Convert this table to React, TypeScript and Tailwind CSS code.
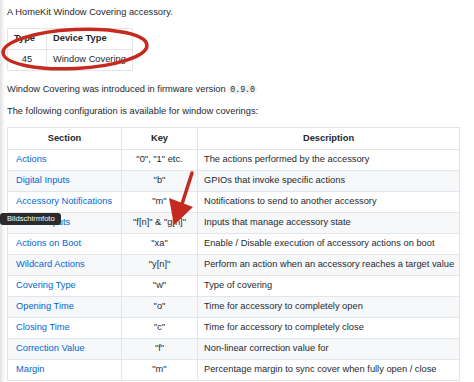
const rows: [string, string, string][] = [
  ["Actions", '"0", "1" etc.', "The actions performed by the accessory"],
  ["Digital Inputs", '"b"', "GPIOs that invoke specific actions"],
  ["Accessory Notifications", '"m"', "Notifications to send to another accessory"],
  ["Status Inputs", '"f[n]" & "g[n]"', "Inputs that manage accessory state"],
  ["Actions on Boot", '"xa"', "Enable / Disable execution of accessory actions on boot"],
  ["Wildcard Actions", '"y[n]"', "Perform an action when an accessory reaches a target value"],
  ["Covering Type", '"w"', "Type of covering"],
  ["Opening Time", '"o"', "Time for accessory to completely open"],
  ["Closing Time", '"c"', "Time for accessory to completely close"],
  ["Correction Value", '"f"', "Non-linear correction value for"],
  ["Margin", '"m"', "Percentage margin to sync cover when fully open / close"],
];

export default function App() {
  return (
    <div className="relative flex h-[382px] w-[474px] overflow-hidden bg-white font-['Liberation_Sans',Arial,sans-serif] text-[9.3px] text-[#24292e]">
      {/* left edge shadow */}
      <div className="w-[5px] shrink-0 bg-gradient-to-r from-[#e2e2e2] to-white" />

      <div className="flex flex-col pl-[2px]">
        <p className="mt-[5px] leading-[14px]">A HomeKit Window Covering accessory.</p>

        {/* device type table */}
        <table className="mt-[9px] w-[126px] border-collapse">
          <thead>
            <tr className="h-[21px]">
              <th className="w-[39px] border border-[#e1e4e8] px-[6px] text-left font-bold">Type</th>
              <th className="border border-[#e1e4e8] px-[6px] text-left font-bold">Device Type</th>
            </tr>
          </thead>
          <tbody>
            <tr className="h-[21px] bg-white">
              <td className="border border-[#e1e4e8] px-[6px] text-center">45</td>
              <td className="border border-[#e1e4e8] px-[6px]">Window Covering</td>
            </tr>
          </tbody>
        </table>

        <p className="mt-[11px] leading-[14px]">
          Window Covering was introduced in firmware version{" "}
          <code className="rounded-[3px] bg-[#f3f4f4] px-[2px] font-['Liberation_Mono',monospace] text-[8.3px]">0.9.0</code>
        </p>
        <p className="mt-[7px] leading-[14px]">The following configuration is available for window coverings:</p>

        {/* configuration table */}
        <table className="mt-[9px] w-[453px] table-fixed border-collapse">
          <colgroup>
            <col className="w-[114px]" />
            <col className="w-[76px]" />
            <col />
          </colgroup>
          <thead>
            <tr className="h-[22px]">
              <th className="border border-[#e1e4e8] font-bold">Section</th>
              <th className="border border-[#e1e4e8] font-bold">Key</th>
              <th className="border border-[#e1e4e8] font-bold">Description</th>
            </tr>
          </thead>
          <tbody>
            {rows.map(([section, key, desc], i) => (
              <tr key={section} className={`h-[21px] ${i % 2 === 1 ? "bg-[#f6f8fa]" : "bg-white"}`}>
                <td className="whitespace-nowrap border border-[#e1e4e8] px-[8px] text-[#0366d6]">{section}</td>
                <td className="whitespace-nowrap border border-[#e1e4e8] text-center">{key}</td>
                <td className="whitespace-nowrap border border-[#e1e4e8] px-[6px]">{desc}</td>
              </tr>
            ))}
          </tbody>
        </table>
      </div>

      {/* annotations */}
      <svg className="pointer-events-none absolute left-0 top-0" width="474" height="382">
        <ellipse cx="75" cy="49" rx="72" ry="19.5" transform="rotate(-3 75 49)" fill="none" stroke="#c42a1f" strokeWidth="3.5" />
        <line x1="192" y1="173" x2="182" y2="204" stroke="#c42a1f" strokeWidth="3.5" strokeLinecap="round" />
        <polygon points="174,225 169,198 193,207" fill="#c42a1f" />
      </svg>

      {/* screenshot tooltip */}
      <div className="absolute left-0 top-[213px] flex h-[12px] w-[61px] items-center rounded-[3px] bg-[#2b2b2b] pl-[7px] text-[7.6px] text-white">
        Bildschirmfoto
      </div>
    </div>
  );
}
